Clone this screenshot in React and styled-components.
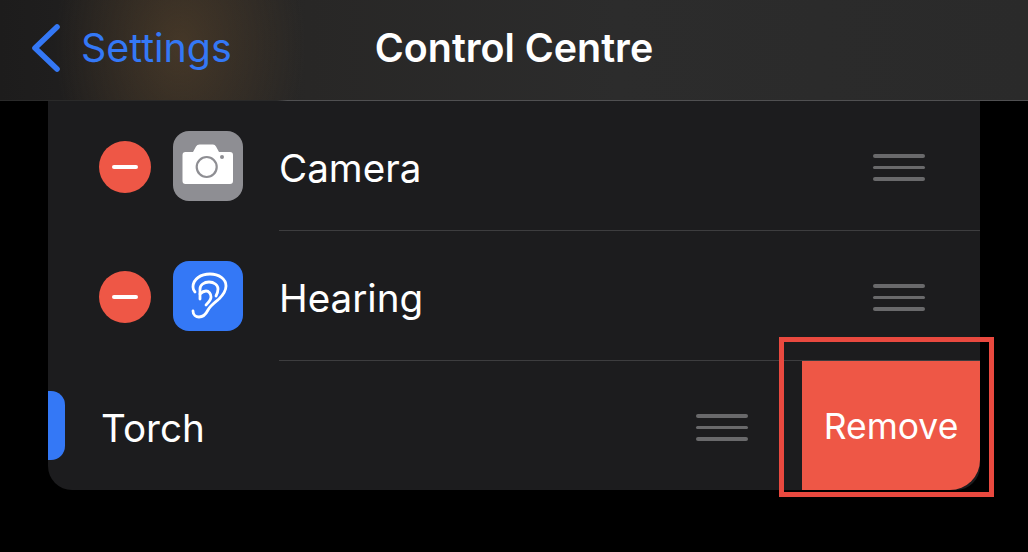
import React from "react";
import styled, { createGlobalStyle } from "styled-components";

const GlobalStyle = createGlobalStyle`
  html, body {
    margin: 0;
    height: 100%;
    background: #000;
    overflow: hidden;
  }
  body {
    font-family: "Inter", "Liberation Sans", sans-serif;
    -webkit-font-smoothing: antialiased;
  }
`;

const Page = styled.div`
  width: 1028px;
  height: 552px;
  background: #000;
`;

const NavBar = styled.header`
  height: 101px;
  box-sizing: border-box;
  display: grid;
  grid-template-columns: 1fr auto 1fr;
  align-items: center;
  padding-bottom: 4px;
  background:
    radial-gradient(ellipse 125px 170px at 180px 45px, rgba(96, 72, 44, 0.55), rgba(96, 72, 44, 0) 100%),
    linear-gradient(90deg, #1d1c1c 0%, #282726 30%, #2c2c2c 60%, #2a2a2a 100%);
  border-bottom: 1px solid;
  border-image: linear-gradient(90deg, #2a2a2a 0%, #2a2a2a 27%, #505052 28%, #505052 100%) 1;
`;

const BackLink = styled.a`
  display: flex;
  align-items: center;
  gap: 20px;
  padding-left: 31px;
  color: #3478f6;
  font-size: 39.4px;
`;

const NavTitle = styled.h1`
  margin: 0;
  color: #fff;
  font-size: 39.4px;
  font-weight: 600;
`;

const Panel = styled.section`
  width: 932px;
  margin-left: 48px;
  background: #1c1c1e;
  border-radius: 0 0 24px 24px;
`;

const Row = styled.div`
  height: 129px;
  display: flex;
  align-items: center;
  padding-left: ${(p) => (p.$swiped ? 0 : 51)}px;
  padding-right: ${(p) => (p.$swiped ? 0 : 55)}px;
`;

const Divider = styled.div`
  height: 1px;
  margin-left: 231px;
  background: #3d3d3f;
`;

const MinusButton = styled.span`
  width: 52px;
  height: 52px;
  flex: none;
  margin-top: 2px;
  border-radius: 50%;
  background: #ee5746;
  display: flex;
  align-items: center;
  justify-content: center;

  &::before {
    content: "";
    width: 26px;
    height: 4px;
    border-radius: 3px;
    background: #fff;
  }
`;

const AppIcon = styled.span`
  width: 70px;
  height: 70px;
  flex: none;
  margin-left: 22px;
  border-radius: 16px;
  background: ${(p) => p.$color};
  display: flex;
`;

const Label = styled.span`
  margin: 4px 0 0 ${(p) => p.$offset}px;
  color: #fff;
  font-size: 38.6px;
  font-weight: 400;
`;

const Handle = styled.span`
  width: 52px;
  flex: none;
  margin: 4px 0 0 auto;
  display: flex;
  flex-direction: column;
  gap: 8px;

  i {
    height: 3.5px;
    border-radius: 2px;
    background: #69696b;
  }
`;

const ActiveTab = styled.span`
  width: 17px;
  height: 69px;
  flex: none;
  background: #3478f6;
  border-radius: 0 14px 14px 0;
`;

const RemoveButton = styled.button`
  position: relative;
  width: 178px;
  height: 100%;
  flex: none;
  margin-left: 54px;
  padding: 2px 0 0;
  border: 0;
  border-radius: 0 0 30px 0;
  background: #ee5746;
  color: #fff;
  font-family: inherit;
  font-size: 35.5px;
  font-weight: 400;
`;

const Highlight = styled.span`
  position: absolute;
  top: -24px;
  left: -23px;
  right: -14px;
  bottom: -7px;
  border: 5px solid #e9493f;
  pointer-events: none;
`;

const ChevronIcon = () => (
  <svg width="30" height="48" viewBox="0 0 30 48" fill="none">
    <path d="M26 3 L4 24 L26 45" stroke="#3478f6" strokeWidth="5.6" strokeLinecap="round" strokeLinejoin="round" />
  </svg>
);

const CameraIcon = () => (
  <svg width="70" height="70" viewBox="0 0 70 70">
    <path
      d="M12.5 21 H20 L23 15.5 Q24 13.5 26.5 13.5 H40 Q42 13.5 43 15.5 L46 21 H57 Q60 21 60 24 V50 Q60 53 57 53 H12.5 Q9.5 53 9.5 50 V24 Q9.5 21 12.5 21 Z"
      fill="#fff"
    />
    <circle cx="33.7" cy="36" r="10" fill="none" stroke="#8e8e93" strokeWidth="2.2" />
    <circle cx="49" cy="26" r="2" fill="#8e8e93" />
  </svg>
);

const EarIcon = () => (
  <svg width="70" height="70" viewBox="0 0 70 70" fill="none" stroke="#fff" strokeWidth="2.8" strokeLinecap="round" strokeLinejoin="round">
    <path d="M20 50 C20 54 23 56 26 56 C31 56 33 53 35 49 C37 45 41 42 46 38 C50 34 53 30 53 25 C53 18 46 13 37 13 C28 13 20 18 20 26 C20 28 21 30 22 31" />
    <path d="M27 38 V28 C27 24 31 21 36 21 C41 21 45 24 45 28 C45 31 44 33 43 35" />
    <path d="M27 33 C29 31 31 30 33 30 C36 30 38 33 38 36 C38 39 36 41 33 44" />
  </svg>
);

const DragHandle = () => (
  <Handle>
    <i />
    <i />
    <i />
  </Handle>
);

export default function App() {
  return (
    <Page>
      <GlobalStyle />
      <NavBar>
        <BackLink>
          <ChevronIcon />
          Settings
        </BackLink>
        <NavTitle>Control Centre</NavTitle>
      </NavBar>
      <Panel>
        <Row>
          <MinusButton />
          <AppIcon $color="#8e8e93">
            <CameraIcon />
          </AppIcon>
          <Label $offset={36}>Camera</Label>
          <DragHandle />
        </Row>
        <Divider />
        <Row>
          <MinusButton />
          <AppIcon $color="#3478f6">
            <EarIcon />
          </AppIcon>
          <Label $offset={36}>Hearing</Label>
          <DragHandle />
        </Row>
        <Divider />
        <Row $swiped>
          <ActiveTab />
          <Label $offset={36}>Torch</Label>
          <DragHandle />
          <RemoveButton>
            Remove
            <Highlight />
          </RemoveButton>
        </Row>
      </Panel>
    </Page>
  );
}
